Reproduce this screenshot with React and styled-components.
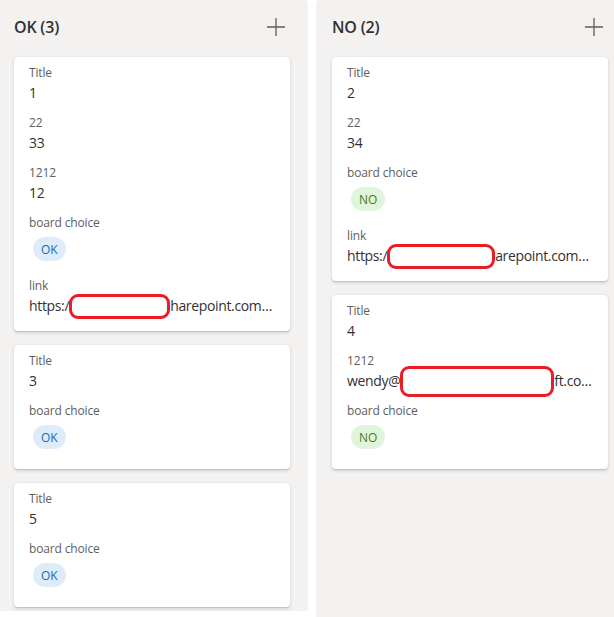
import styled, { createGlobalStyle } from 'styled-components';

const GlobalStyle = createGlobalStyle`
  html, body {
    margin: 0;
    padding: 0;
    background: #ffffff;
    overflow: hidden;
  }
  body {
    font-family: "Segoe UI", "Open Sans", "Noto Sans", sans-serif;
    color: #323130;
  }
`;

const Board = styled.div`
  display: flex;
  align-items: flex-start;
  gap: 8px;
  margin-left: -2px;
  height: 100vh;
`;

const Column = styled.section`
  flex: 0 0 auto;
  width: 310px;
  min-width: 0;
  box-sizing: border-box;
  background: #f3f2f1;
  border-radius: 4px 4px 0 0;
  padding: 0 18px 4px 16px;
  height: ${(p) => (p.$fill ? '100%' : 'auto')};
`;

const ColumnHeader = styled.header`
  height: 54px;
  margin-bottom: 3px;
  display: flex;
  align-items: center;
  justify-content: space-between;
`;

const ColumnTitle = styled.h2`
  margin: 0;
  font-size: 16px;
  font-weight: 600;
  letter-spacing: -0.2px;
  color: #323130;
`;

const AddButton = styled.button`
  border: 0;
  background: transparent;
  padding: 0;
  margin-right: 5px;
  width: 18px;
  height: 18px;
  display: flex;
  cursor: pointer;
`;

const CardList = styled.div`
  display: flex;
  flex-direction: column;
  gap: 14px;
`;

const Card = styled.article`
  background: #ffffff;
  border-radius: 4px;
  padding: 8px 15px 3px;
  box-shadow: 0 1.6px 3.6px rgba(0, 0, 0, 0.13), 0 0.3px 0.9px rgba(0, 0, 0, 0.11);
`;

const Field = styled.div`
  position: relative;
  margin-bottom: 12px;
`;

const Label = styled.div`
  font-size: 12px;
  line-height: 16px;
  letter-spacing: -0.15px;
  color: #605e5c;
  margin-bottom: 2px;
`;

const Value = styled.div`
  font-size: 14px;
  line-height: 20px;
  letter-spacing: -0.35px;
  color: #323130;
  white-space: nowrap;
  overflow: hidden;
  text-overflow: ellipsis;
`;

const pillColours = {
  OK: { bg: '#deecf9', fg: '#1a6bb5' },
  NO: { bg: '#dff6dd', fg: '#4b7a0d' },
};

const Pill = styled.span`
  display: inline-flex;
  align-items: center;
  height: 24px;
  padding: 0 8px;
  margin: 4px 0 5px 4px;
  border-radius: 12px;
  font-size: 12px;
  background: ${(p) => pillColours[p.$choice].bg};
  color: ${(p) => pillColours[p.$choice].fg};
`;

// keeps room in the line for the red marker drawn over the screenshot
const RedactSlot = styled.span`
  display: inline-block;
  vertical-align: top;
  width: ${(p) => p.$w}px;
  height: 20px;
`;

// red marker scribbled over private parts of the screenshot
const Redaction = styled.span`
  position: absolute;
  box-sizing: border-box;
  width: ${(p) => p.$w}px;
  height: ${(p) => p.$h}px;
  margin-top: ${(p) => (20 - p.$h) / 2}px;
  border: 3px solid #ec1c24;
  border-radius: 9px;
  background: #ffffff;
`;

const PlusIcon = () => (
  <svg width="18" height="18" viewBox="0 0 18 18">
    <path d="M0 9h18M9 0v18" stroke="#605e5c" strokeWidth="1.3" fill="none" />
  </svg>
);

const columns = [
  {
    name: 'OK',
    cards: [
      {
        id: 1,
        fields: [
          ['Title', '1'],
          ['22', '33'],
          ['1212', '12'],
          ['board choice', { choice: 'OK' }],
          ['link', { pre: 'https:/', w: 101, h: 25, post: 'harepoint.com/sites/board' }],
        ],
      },
      { id: 3, fields: [['Title', '3'], ['board choice', { choice: 'OK' }]] },
      { id: 5, fields: [['Title', '5'], ['board choice', { choice: 'OK' }]] },
    ],
  },
  {
    name: 'NO',
    fill: true,
    cards: [
      {
        id: 2,
        fields: [
          ['Title', '2'],
          ['22', '34'],
          ['board choice', { choice: 'NO' }],
          ['link', { pre: 'https:/', w: 108, h: 25, post: 'arepoint.com/sites/board' }],
        ],
      },
      {
        id: 4,
        fields: [
          ['Title', '4'],
          ['1212', { pre: 'wendy@', w: 154, h: 31, post: 'ft.com.example' }],
          ['board choice', { choice: 'NO' }],
        ],
      },
    ],
  },
];

const renderValue = (value) => {
  if (typeof value === 'string') return <Value>{value}</Value>;
  if (value.choice) return <Pill $choice={value.choice}>{value.choice}</Pill>;
  return (
    <Value>
      {value.pre}
      <RedactSlot $w={value.w}>
        <Redaction $w={value.w} $h={value.h} />
      </RedactSlot>
      {value.post}
    </Value>
  );
};

const App = () => (
  <>
    <GlobalStyle />
    <Board>
      {columns.map((col) => (
        <Column key={col.name} $fill={col.fill}>
          <ColumnHeader>
            <ColumnTitle>
              {col.name} ({col.cards.length})
            </ColumnTitle>
            <AddButton aria-label="Add item">
              <PlusIcon />
            </AddButton>
          </ColumnHeader>
          <CardList>
            {col.cards.map((card) => (
              <Card key={card.id}>
                {card.fields.map(([label, value]) => (
                  <Field key={label}>
                    <Label>{label}</Label>
                    {renderValue(value)}
                  </Field>
                ))}
              </Card>
            ))}
          </CardList>
        </Column>
      ))}
    </Board>
  </>
);

export default App;
